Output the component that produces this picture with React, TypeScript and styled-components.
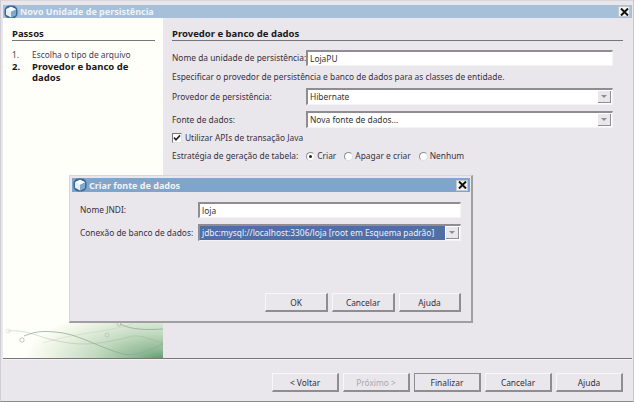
import React from "react";
import styled, { createGlobalStyle } from "styled-components";

const Global = createGlobalStyle`
  html, body { margin: 0; padding: 0; background: #e9e7ec; }
  body { width: 634px; height: 402px; overflow: hidden; font-family: "Noto Sans", sans-serif; font-size: 8.4px; color: #3a3040; }
`;

const Window = styled.div`
  position: relative;
  box-sizing: border-box;
  width: 634px;
  height: 402px;
  padding: 4px 1px 0 2px;
  background: #e9e7ec;
  display: flex;
  flex-direction: column;
  border-top: 1px solid #d8d6da;
  border-left: 1px solid #d0ced2;
  border-right: 1px solid #c8c6ca;
  border-bottom: 1px solid #8c8a8e;
`;

const TitleBar = styled.div<{ $dark?: boolean }>`
  display: flex;
  align-items: center;
  gap: 2px;
  height: ${(p) => (p.$dark ? "14px" : "13px")};
  flex: none;
  background: ${(p) => (p.$dark ? "#7fa5cc" : "#a6c0da")};
  padding: 0 2px 0 1px;
`;

const TitleText = styled.span`
  flex: 1;
  color: #f0f3f8;
  font-size: 9px;
  font-weight: 700;
`;

const CloseBox = styled.div`
  width: 12px;
  height: 11px;
  background: #f2f2f2;
  border: 1px solid #c8c8c8;
  box-sizing: border-box;
  display: flex;
  align-items: center;
  justify-content: center;
`;

const Body = styled.div`
  flex: 1;
  display: flex;
  min-height: 0;
`;

const Side = styled.aside`
  width: 160px;
  flex: none;
  background: #fffff9;
  display: flex;
  flex-direction: column;
  padding-top: 9px;
`;

const SideHead = styled.div`
  margin: 0 8px 0 9px;
  border-bottom: 1px solid #77757a;
  font-weight: 700;
  font-size: 9.5px;
  line-height: 13px;
  color: #1c1820;
`;

const Steps = styled.ol`
  list-style: none;
  margin: 8px 8px 0 9px;
  padding: 0;
`;

const Step = styled.li<{ $current?: boolean }>`
  display: flex;
  font-size: ${(p) => (p.$current ? "9.5px" : "8.4px")};
  line-height: 11.5px;
  font-weight: ${(p) => (p.$current ? 700 : 400)};
  color: ${(p) => (p.$current ? "#1c1820" : "#4a3a58")};
`;

const StepNum = styled.span`
  width: 20px;
  flex: none;
`;

const Art = styled.svg`
  display: block;
  margin-top: auto;
  width: 160px;
  height: 70px;
  flex: none;
`;

const Main = styled.main`
  flex: 1;
  padding: 9px 9px 0 9px;
  display: flex;
  flex-direction: column;
`;

const MainHead = styled(SideHead)`
  margin: 0;
`;

const Form = styled.div`
  padding-right: 10px;
  display: flex;
  flex-direction: column;
`;

const Row = styled.div<{ $top: number }>`
  display: flex;
  align-items: center;
  margin-top: ${(p) => p.$top}px;
  line-height: 12px;
  white-space: nowrap;
`;

const Label = styled.label<{ $w: number }>`
  width: ${(p) => p.$w}px;
  flex: none;
  white-space: nowrap;
`;

const Field = styled.div<{ $h: number }>`
  flex: 1;
  height: ${(p) => p.$h}px;
  box-sizing: border-box;
  display: flex;
  align-items: center;
  background: #fff;
  border-top: 2px solid #8f8d91;
  border-left: 2px solid #8f8d91;
  border-right: 1px solid #f4f3f5;
  border-bottom: 1px solid #f4f3f5;
  padding-left: 2px;
  color: #333;
  min-width: 0;
`;

const Combo = styled(Field)`
  padding-left: 0;
`;

const ComboValue = styled.div<{ $selected?: boolean }>`
  flex: 1;
  align-self: stretch;
  display: flex;
  align-items: center;
  padding-left: 2px;
  white-space: nowrap;
  overflow: hidden;
  background: ${(p) => (p.$selected ? "#4f6fa6" : "#fff")};
  color: ${(p) => (p.$selected ? "#eef0f6" : "#333")};
`;

const ComboArrow = styled.div`
  width: 12px;
  align-self: stretch;
  flex: none;
  margin: 1px;
  background: #e9e7ec;
  border-right: 1px solid #8f8d91;
  border-bottom: 1px solid #8f8d91;
  display: flex;
  align-items: center;
  justify-content: center;
  &::after {
    content: "";
    border: 3px solid transparent;
    border-top: 3px solid #8f8d91;
    border-bottom: 0;
  }
`;

const Tick = styled.span`
  width: 10px;
  height: 10px;
  box-sizing: border-box;
  flex: none;
  background: #fff;
  border-top: 1px solid #77757a;
  border-left: 1px solid #77757a;
  border-right: 1px solid #e0dfe2;
  border-bottom: 1px solid #e0dfe2;
  margin-right: 3px;
  display: flex;
`;

const Radio = styled.span<{ $on?: boolean }>`
  width: 9px;
  height: 9px;
  box-sizing: border-box;
  flex: none;
  border-radius: 50%;
  background: #fff;
  border: 1px solid;
  border-color: #8f8d91 #e0dfe2 #e0dfe2 #8f8d91;
  margin: 0 2px 0 8px;
  display: flex;
  align-items: center;
  justify-content: center;
  &::after {
    content: "";
    width: 3px;
    height: 3px;
    border-radius: 50%;
    background: ${(p) => (p.$on ? "#222" : "transparent")};
  }
`;

const Footer = styled.footer`
  height: 43px;
  flex: none;
  border-top: 1px solid #77757a;
  box-shadow: inset 0 1px 0 #f4f3f5;
  display: flex;
  justify-content: flex-end;
  gap: 4px;
  padding: 14px 9px 0 0;
  box-sizing: border-box;
`;

const Button = styled.button<{ $w?: number; $primary?: boolean }>`
  width: ${(p) => p.$w ?? 67}px;
  height: 19px;
  padding: 0;
  box-sizing: border-box;
  font: inherit;
  color: ${(p) => (p.disabled ? "#a9a7ad" : "#33303a")};
  background: #e9e7ec;
  border: 1px solid;
  border-color: ${(p) => (p.$primary ? "#8f8d91" : "#f7f6f8")} #8f8d91 #8f8d91 ${(p) => (p.$primary ? "#8f8d91" : "#f7f6f8")};
  border-right-width: 2px;
  border-bottom-width: 2px;
`;

const Dialog = styled.div`
  position: absolute;
  left: 68px;
  top: 174px;
  width: 404px;
  height: 148px;
  box-sizing: border-box;
  background: #e9e7ec;
  border-top: 1px solid #d8d6da;
  border-left: 1px solid #d8d6da;
  border-right: 2px solid #a09ea2;
  border-bottom: 2px solid #a09ea2;
  padding: 2px 1px 0 2px;
  display: flex;
  flex-direction: column;
`;

const DialogBody = styled.div`
  flex: 1;
  padding: 10px 9px 0 8px;
  display: flex;
  flex-direction: column;
`;

const DialogButtons = styled.div`
  margin-top: auto;
  margin-bottom: 9px;
  display: flex;
  justify-content: flex-end;
  gap: 4px;
`;

const CubeIcon = () => (
  <svg width="14" height="14" viewBox="0 0 14 14" style={{ flex: "none" }}>
    <rect x="0.5" y="0.5" width="13" height="13" rx="5" fill="#3b6a98" />
    <path d="M7 1.8 12 4.2 V9.8 L7 12.4 2 9.8 V4.2Z" fill="#e6eef5" />
    <path d="M7 6.6 12 4.2 V9.8 L7 12.4Z" fill="#7fa8cc" />
    <path d="M7 6.6 2 4.2 7 1.8 12 4.2Z" fill="#f8fbfd" />
  </svg>
);

const CloseIcon = () => (
  <svg width="9" height="8" viewBox="0 0 9 8">
    <path d="M1 0.5 8 7.5 M8 0.5 1 7.5" stroke="#111" strokeWidth="2" />
  </svg>
);

const CheckIcon = () => (
  <svg width="8" height="8" viewBox="0 0 8 8">
    <path d="M1 3.6 3 5.8 7 1.4" fill="none" stroke="#222" strokeWidth="1.6" />
  </svg>
);

const WaveArt = () => (
  <Art viewBox="0 0 160 70">
    <defs>
      <radialGradient id="g" gradientUnits="userSpaceOnUse" cx="0" cy="0" r="1" gradientTransform="translate(160 75) scale(140 60)">
        <stop offset="0" stopColor="#4e8a5a" />
        <stop offset="0.2" stopColor="#8ab592" />
        <stop offset="0.5" stopColor="#c2dabf" />
        <stop offset="0.8" stopColor="#eaf2e2" />
        <stop offset="1" stopColor="#fffff9" />
      </radialGradient>
    </defs>
    <rect width="160" height="70" fill="url(#g)" />
    <g fill="none" stroke="#8fa89a" strokeOpacity="0.75">
      <path d="M21 48C35 42 45 43 60 45C78 48 98 60 120 66C135 69 150 60 160 56" strokeWidth="1" />
      <path d="M5 43C25 41 35 50 60 54C80 58 100 56 130 48C140 47 150 53 160 55" strokeWidth="0.8" strokeOpacity="0.45" />
      <path d="M117 36C128 42 145 42 160 41" strokeWidth="1" />
      <circle cx="19" cy="52" r="2.2" strokeWidth="0.8" />
      <circle cx="5" cy="43" r="2" strokeWidth="0.6" strokeOpacity="0.4" />
      <circle cx="104" cy="47" r="2" strokeWidth="0.7" strokeOpacity="0.5" />
      <circle cx="116" cy="36" r="2" strokeWidth="0.7" />
      <path d="M40 55C70 45 100 45 130 36" strokeWidth="0.5" strokeOpacity="0.4" />
    </g>
  </Art>
);

export default function App() {
  return (
    <>
      <Global />
      <Window>
        <TitleBar>
          <CubeIcon />
          <TitleText>Novo Unidade de persistência</TitleText>
          <CloseBox>
            <CloseIcon />
          </CloseBox>
        </TitleBar>
        <Body>
          <Side>
            <SideHead>Passos</SideHead>
            <Steps>
              <Step>
                <StepNum>1.</StepNum>
                <span>Escolha o tipo de arquivo</span>
              </Step>
              <Step $current>
                <StepNum>2.</StepNum>
                <span>Provedor e banco de dados</span>
              </Step>
            </Steps>
            <WaveArt />
          </Side>
          <Main>
            <MainHead>Provedor e banco de dados</MainHead>
            <Form>
              <Row $top={9}>
                <Label $w={134}>Nome da unidade de persistência:</Label>
                <Field $h={16}>LojaPU</Field>
              </Row>
              <Row $top={5}>Especificar o provedor de persistência e banco de dados para as classes de entidade.</Row>
              <Row $top={5}>
                <Label $w={134}>Provedor de persistência:</Label>
                <Combo $h={17}>
                  <ComboValue>Hibernate</ComboValue>
                  <ComboArrow />
                </Combo>
              </Row>
              <Row $top={6}>
                <Label $w={134}>Fonte de dados:</Label>
                <Combo $h={17}>
                  <ComboValue>Nova fonte de dados...</ComboValue>
                  <ComboArrow />
                </Combo>
              </Row>
              <Row $top={4}>
                <Tick>
                  <CheckIcon />
                </Tick>
                Utilizar APIs de transação Java
              </Row>
              <Row $top={6}>
                Estratégia de geração de tabela:
                <Radio $on />
                Criar
                <Radio />
                Apagar e criar
                <Radio />
                Nenhum
              </Row>
            </Form>
          </Main>
        </Body>
        <Footer>
          <Button>&lt; Voltar</Button>
          <Button disabled>Próximo &gt;</Button>
          <Button $primary>Finalizar</Button>
          <Button>Cancelar</Button>
          <Button>Ajuda</Button>
        </Footer>
        <Dialog>
          <TitleBar $dark>
            <CubeIcon />
            <TitleText>Criar fonte de dados</TitleText>
            <CloseBox>
              <CloseIcon />
            </CloseBox>
          </TitleBar>
          <DialogBody>
            <Row $top={0}>
              <Label $w={118}>Nome JNDI:</Label>
              <Field $h={16}>loja</Field>
            </Row>
            <Row $top={6}>
              <Label $w={118}>Conexão de banco de dados:</Label>
              <Combo $h={17}>
                <ComboValue $selected>jdbc:mysql://localhost:3306/loja [root em Esquema padrão]</ComboValue>
                <ComboArrow />
              </Combo>
            </Row>
            <DialogButtons>
              <Button $w={63}>OK</Button>
              <Button $w={63}>Cancelar</Button>
              <Button $w={62}>Ajuda</Button>
            </DialogButtons>
          </DialogBody>
        </Dialog>
      </Window>
    </>
  );
}
